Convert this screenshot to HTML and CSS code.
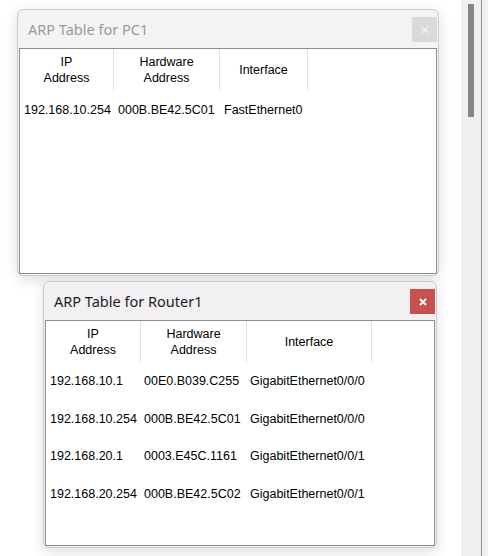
FILE: index.html
```html
<!DOCTYPE html>
<html lang="en">
<head>
    <meta charset="UTF-8">
    <meta name="viewport" content="width=device-width, initial-scale=1.0">
    <title>ARP Tables</title>
    <link rel="stylesheet" href="styles.css">
</head>
<body>
    <div class="workspace">
        <div class="window pc inactive">
            <div class="title-bar">
                <span class="title">ARP Table for PC1</span>
                <div class="close">
                    <svg width="8" height="8" viewBox="0 0 8 8"><path d="M1 1 L7 7 M7 1 L1 7" /></svg>
                </div>
            </div>
            <div class="table-box">
                <div class="arp-table">
                    <div class="th">IP<br>Address</div>
                    <div class="th">Hardware<br>Address</div>
                    <div class="th">Interface</div>
                    <div class="th blank"></div>

                    <div class="td">192.168.10.254</div>
                    <div class="td">000B.BE42.5C01</div>
                    <div class="td">FastEthernet0</div>
                    <div class="td"></div>
                </div>
            </div>
        </div>

        <div class="window router">
            <div class="title-bar">
                <span class="title">ARP Table for Router1</span>
                <div class="close">
                    <svg width="8" height="8" viewBox="0 0 8 8"><path d="M1 1 L7 7 M7 1 L1 7" /></svg>
                </div>
            </div>
            <div class="table-box">
                <div class="arp-table">
                    <div class="th">IP<br>Address</div>
                    <div class="th">Hardware<br>Address</div>
                    <div class="th">Interface</div>
                    <div class="th blank"></div>

                    <div class="td">192.168.10.1</div>
                    <div class="td">00E0.B039.C255</div>
                    <div class="td">GigabitEthernet0/0/0</div>
                    <div class="td"></div>

                    <div class="td">192.168.10.254</div>
                    <div class="td">000B.BE42.5C01</div>
                    <div class="td">GigabitEthernet0/0/0</div>
                    <div class="td"></div>

                    <div class="td">192.168.20.1</div>
                    <div class="td">0003.E45C.1161</div>
                    <div class="td">GigabitEthernet0/0/1</div>
                    <div class="td"></div>

                    <div class="td">192.168.20.254</div>
                    <div class="td">000B.BE42.5C02</div>
                    <div class="td">GigabitEthernet0/0/1</div>
                    <div class="td"></div>
                </div>
            </div>
        </div>
    </div>

    <div class="side-strip">
        <div class="thumb"></div>
        <div class="divider"></div>
    </div>
</body>
</html>
```

FILE: styles.css
```css
body {
    margin: 0;
    padding: 0;
    background-color: #ffffff;
    display: flex;
    height: 556px;
    overflow: hidden;
    font-family: "Liberation Sans", Arial, sans-serif;
}
.workspace {
    width: 461px;
    display: flex;
    flex-direction: column;
    align-items: flex-start;
}
.window {
    box-sizing: border-box;
    border: 1px solid #cbcbcb;
    border-radius: 6px;
    background-color: #f3f3f3;
    padding: 0 1px 1px 1px;
    display: flex;
    flex-direction: column;
    box-shadow: 0 4px 14px rgba(0, 0, 0, 0.13);
}
.window.pc {
    margin: 9px 0 0 17px;
    width: 422px;
    height: 267px;
}
.window.router {
    margin: 5px 0 0 43px;
    width: 394px;
    height: 267px;
    background-color: #f3f0f3;
}
.title-bar {
    height: 38px;
    display: flex;
    justify-content: space-between;
    align-items: flex-start;
}
.title {
    font-family: "Noto Sans", "Open Sans", sans-serif;
    font-size: 14.5px;
    color: #1c1c1c;
    margin: 9px 0 0 9px;
}
.inactive .title {
    color: #9a9a9a;
}
.close {
    width: 25px;
    height: 25px;
    margin-top: 7px;
    background-color: #c75050;
    display: flex;
    align-items: center;
    justify-content: center;
}
.close path {
    stroke: #ffffff;
    stroke-width: 1.8;
    fill: none;
}
.inactive .close {
    background-color: #dadada;
}
.inactive .close path {
    stroke: #f2f2f2;
    stroke-width: 1.2;
}
.table-box {
    flex: 1;
    background-color: #ffffff;
    border: 1px solid #8d8d99;
    font-size: 12.5px;
    color: #000000;
}
.arp-table {
    display: grid;
}
.pc .arp-table {
    grid-template-columns: 94px 106px 88px 1fr;
}
.router .arp-table {
    grid-template-columns: 95px 106px 125px 1fr;
}
.th {
    height: 42px;
    display: flex;
    align-items: center;
    justify-content: center;
    text-align: center;
    line-height: 16px;
    border-right: 1px solid #e4e4e4;
}
.th.blank {
    border-right: none;
}
.td {
    height: 37.5px;
    line-height: 39px;
    padding-left: 4px;
    white-space: nowrap;
}
.router .td {
    line-height: 37px;
    padding-left: 3px;
}
.router .td:nth-child(4n+1) {
    padding-left: 4px;
}
.side-strip {
    width: 27px;
    background-color: #f0f0f0;
    display: flex;
    align-items: flex-start;
}
.thumb {
    width: 6px;
    height: 113px;
    margin: 4px 0 0 7px;
    background-color: #868686;
}
.divider {
    width: 1px;
    height: 556px;
    margin-left: 7px;
    background-color: #8b8b9b;
}
```
